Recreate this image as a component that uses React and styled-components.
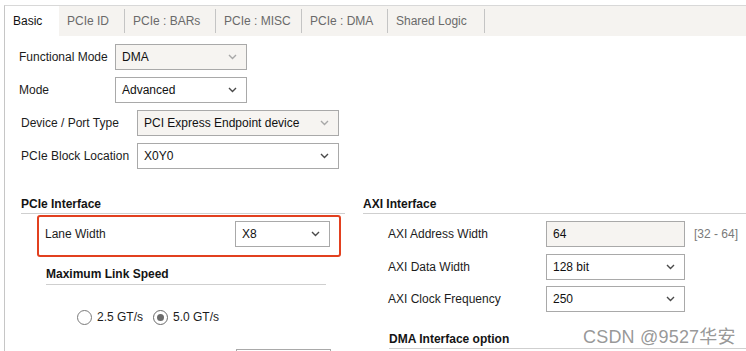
import React from 'react';
import styled, { createGlobalStyle } from 'styled-components';

const GlobalStyle = createGlobalStyle`
  html, body {
    margin: 0;
    padding: 0;
    background: #ffffff;
    overflow: hidden;
  }
  body {
    font-family: "Liberation Sans", Arial, sans-serif;
    font-size: 12px;
    color: #1c1c1c;
  }
`;

const Frame = styled.div`
  position: relative;
  margin: 5px 0 0 4px;
  height: 346px;
  border-left: 1px solid #c6c6c6;
  border-top: 1px solid #d8d8d8;
  overflow: hidden;
`;

const TabBar = styled.div`
  display: flex;
  height: 30px;
  background: #f5f3f0;
`;

const Tab = styled.div`
  position: relative;
  display: flex;
  align-items: center;
  width: ${({ $width }) => $width}px;
  padding-left: 8px;
  box-sizing: border-box;
  background: ${({ $active }) => ($active ? '#ffffff' : 'transparent')};
  color: ${({ $active }) => ($active ? '#111' : '#6a6a6a')};

  &::after {
    content: '';
    display: ${({ $active }) => ($active ? 'none' : 'block')};
    position: absolute;
    right: 0;
    top: 3px;
    bottom: 3px;
    width: 1px;
    background: #c4c4c4;
  }
`;

const Content = styled.div`
  padding-top: 8px;
`;

const TopForm = styled.div`
  display: flex;
  flex-direction: column;
  gap: 7px;
`;

const Row = styled.div`
  display: flex;
  align-items: center;
  height: 26px;
  padding-left: ${({ $indent }) => $indent}px;
`;

const Label = styled.div`
  width: ${({ $width }) => $width}px;
  flex-shrink: 0;
  color: #1c1c1c;
  white-space: nowrap;
`;

const Box = styled.div`
  display: flex;
  align-items: center;
  justify-content: space-between;
  box-sizing: border-box;
  width: ${({ $width }) => $width}px;
  height: 26px;
  padding: 0 9px 0 6px;
  border: 1px solid #a9a9a9;
  background: ${({ $muted }) => ($muted ? '#f6f4f1' : '#ffffff')};
  color: #111;
`;

const Columns = styled.div`
  display: flex;
  gap: 18px;
  margin-top: 27px;
  padding-left: 16px;
`;

const LeftCol = styled.div`
  width: 324px;
  flex-shrink: 0;
`;

const RightCol = styled.div`
  flex: 1;
`;

const Header = styled.div`
  font-weight: bold;
  line-height: 16px;
  width: ${({ $width }) => ($width ? `${$width}px` : 'auto')};
  padding-bottom: ${({ $pb }) => $pb || 1}px;
  margin-left: ${({ $indent }) => $indent || 0}px;
  margin-top: ${({ $top }) => $top || 0}px;
  border-bottom: 1px solid #cfcfcf;
  color: #141414;
`;

const Highlight = styled.div`
  display: flex;
  align-items: center;
  justify-content: space-between;
  margin: 1px 0 0 16px;
  width: 304px;
  height: 42px;
  box-sizing: border-box;
  padding: 4px 9px 8px 6px;
  border: 2px solid #e2401f;
  border-radius: 3px;
`;

const RadioRow = styled.div`
  display: flex;
  align-items: center;
  height: 16px;
  margin: 24px 0 0 56px;
`;

const RadioItem = styled.label`
  display: flex;
  align-items: center;
  gap: 5px;
  margin-right: 10px;
  color: #1c1c1c;
`;

const RadioCircle = styled.span`
  display: flex;
  align-items: center;
  justify-content: center;
  width: 15px;
  height: 15px;
  box-sizing: border-box;
  border-radius: 50%;
  border: 1px solid ${({ $on }) => ($on ? '#6a6a6a' : '#7a7a7a')};
  background: #fff;

  &::after {
    content: '';
    display: ${({ $on }) => ($on ? 'block' : 'none')};
    width: 7px;
    height: 7px;
    border-radius: 50%;
    background: #6b6b6b;
  }
`;

const CutBox = styled(Box)`
  margin: 24px 0 0 215px;
`;

const AxiRows = styled.div`
  display: flex;
  flex-direction: column;
  gap: 6.5px;
  margin-top: 7px;
`;

const Range = styled.span`
  margin-left: 9px;
  color: #7a7a7a;
`;

const Watermark = styled.div`
  position: absolute;
  left: 578px;
  top: 316px;
  font-family: "Liberation Sans", "Noto Sans CJK SC", sans-serif;
  font-size: 18px;
  color: rgba(125, 125, 125, 0.8);
  letter-spacing: 0.2px;
`;

function Chevron({ muted }) {
  return (
    <svg width="9" height="6" viewBox="0 0 9 6">
      <polyline
        points="1,1 4.5,4.5 8,1"
        fill="none"
        stroke={muted ? '#a8a8a8' : '#4a4a4a'}
        strokeWidth="1.4"
      />
    </svg>
  );
}

function Select({ value, width, muted }) {
  return (
    <Box $width={width} $muted={muted}>
      <span>{value}</span>
      <Chevron muted={muted} />
    </Box>
  );
}

const tabs = [
  { name: 'Basic', width: 54, active: true },
  { name: 'PCIe ID', width: 66 },
  { name: 'PCIe : BARs', width: 91 },
  { name: 'PCIe : MISC', width: 86 },
  { name: 'PCIe : DMA', width: 86 },
  { name: 'Shared Logic', width: 97 },
];

export default function App() {
  return (
    <>
      <GlobalStyle />
      <Frame>
        <TabBar>
          {tabs.map((t) => (
            <Tab key={t.name} $width={t.width} $active={t.active}>
              {t.name}
            </Tab>
          ))}
        </TabBar>
        <Content>
          <TopForm>
            <Row $indent={14}>
              <Label $width={96}>Functional Mode</Label>
              <Select value="DMA" width={132} muted />
            </Row>
            <Row $indent={14}>
              <Label $width={96}>Mode</Label>
              <Select value="Advanced" width={132} />
            </Row>
            <Row $indent={16}>
              <Label $width={116}>Device / Port Type</Label>
              <Select value="PCI Express Endpoint device" width={202} muted />
            </Row>
            <Row $indent={16}>
              <Label $width={116}>PCIe Block Location</Label>
              <Select value="X0Y0" width={202} />
            </Row>
          </TopForm>

          <Columns>
            <LeftCol>
              <Header>PCIe Interface</Header>
              <Highlight>
                <Label>Lane Width</Label>
                <Select value="X8" width={95} />
              </Highlight>
              <Header $indent={25} $top={9} $pb={2} $width={280}>
                Maximum Link Speed
              </Header>
              <RadioRow>
                <RadioItem>
                  <RadioCircle />
                  2.5 GT/s
                </RadioItem>
                <RadioItem>
                  <RadioCircle $on />
                  5.0 GT/s
                </RadioItem>
              </RadioRow>
              <CutBox $width={95} />
            </LeftCol>

            <RightCol>
              <Header>AXI Interface</Header>
              <AxiRows>
                <Row $indent={25}>
                  <Label $width={158}>AXI Address Width</Label>
                  <Box $width={139} $muted>
                    <span>64</span>
                  </Box>
                  <Range>[32 - 64]</Range>
                </Row>
                <Row $indent={25}>
                  <Label $width={158}>AXI Data Width</Label>
                  <Select value="128 bit" width={139} />
                </Row>
                <Row $indent={25}>
                  <Label $width={158}>AXI Clock Frequency</Label>
                  <Select value="250" width={139} />
                </Row>
              </AxiRows>
              <Header $indent={26} $top={19}>
                DMA Interface option
              </Header>
            </RightCol>
          </Columns>
        </Content>
        <Watermark>CSDN @9527华安</Watermark>
      </Frame>
    </>
  );
}
